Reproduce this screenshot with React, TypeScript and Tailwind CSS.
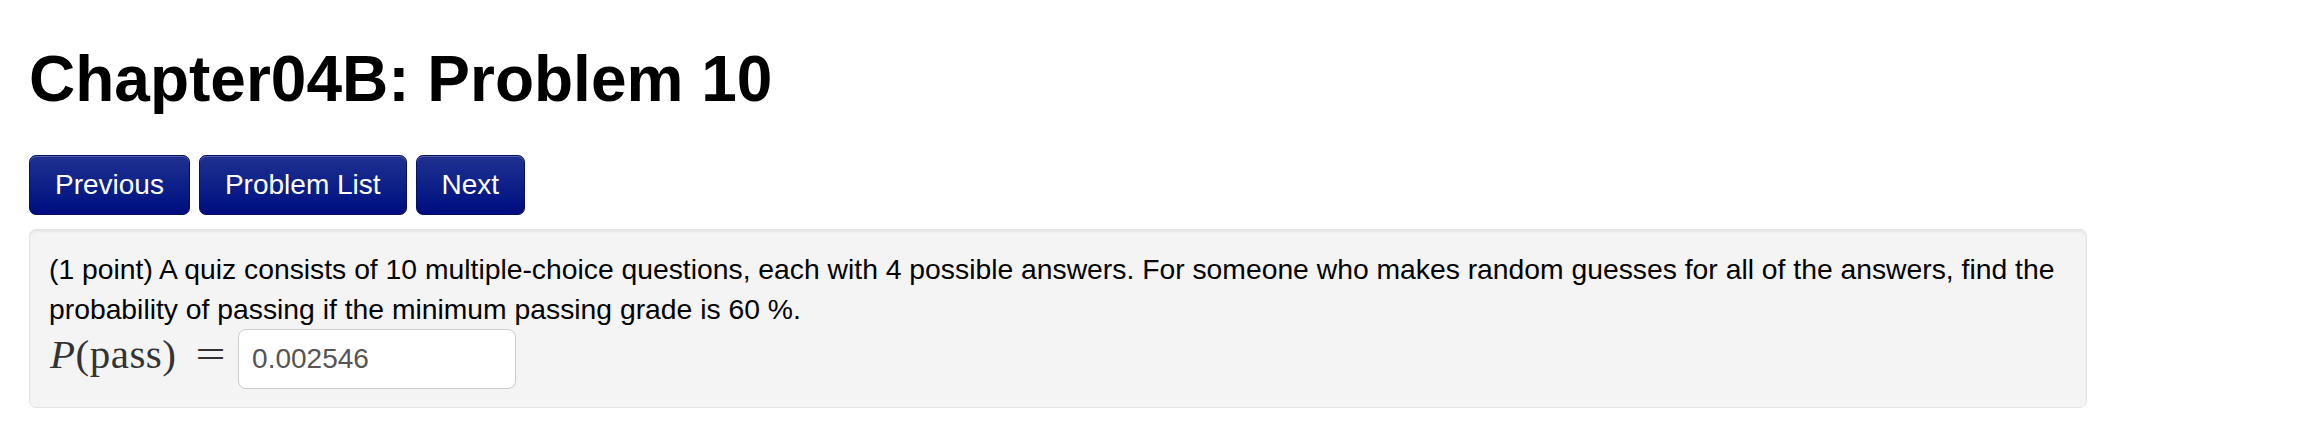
import React from "react";

function NavButton({ label }: { label: string }) {
	return (
		<button className="h-[60px] px-[25px] rounded-[7px] border border-[#06105e] bg-gradient-to-b from-[#1f3090] to-[#000a80] text-white text-[28px] leading-none shadow-[inset_0_1px_0_rgba(255,255,255,0.25)]">
			{label}
		</button>
	);
}

export default function App() {
	return (
		<div className="min-h-[442px] bg-white pl-[29px] pt-[41px] font-['Liberation_Sans',Arial,sans-serif] text-black">
			{/* 제목 */}
			<h1 className="text-[64px] font-bold leading-[77px] m-0">
				Chapter04B: Problem 10
			</h1>

			{/* 이동 버튼 */}
			<div className="flex gap-[9px] mt-[37px]">
				<NavButton label="Previous" />
				<NavButton label="Problem List" />
				<NavButton label="Next" />
			</div>

			{/* 문제 영역 */}
			<div className="mt-[14px] w-[2058px] rounded-[7px] border border-[#e3e3e3] bg-[#f4f4f4] pt-[19px] pb-[18px] px-[19px] shadow-[inset_0_2px_2px_rgba(0,0,0,0.05)]">
				<p className="text-[28.3px] leading-[40px] m-0">
					(1 point) A quiz consists of 10 multiple-choice questions, each with 4 possible answers. For someone who makes random guesses for all of the answers, find the probability of passing if the minimum passing grade is 60 %.
				</p>
				<div className="flex items-baseline h-[60px]">
					<span className="font-['Liberation_Serif',serif] text-[41px] leading-none tracking-[0.5px] text-[#333] pl-[1px]">
						<i>P</i>(pass)
						<span className="ml-[23px] mr-[15px] inline-block scale-x-[1.3]">=</span>
					</span>
					<input
						readOnly
						value="0.002546"
						className="h-[60px] w-[278px] rounded-[8px] border border-[#cccccc] bg-white px-[13px] text-[28px] text-[#555] font-['Liberation_Sans',Arial,sans-serif] outline-none"
					/>
				</div>
			</div>
		</div>
	);
}
